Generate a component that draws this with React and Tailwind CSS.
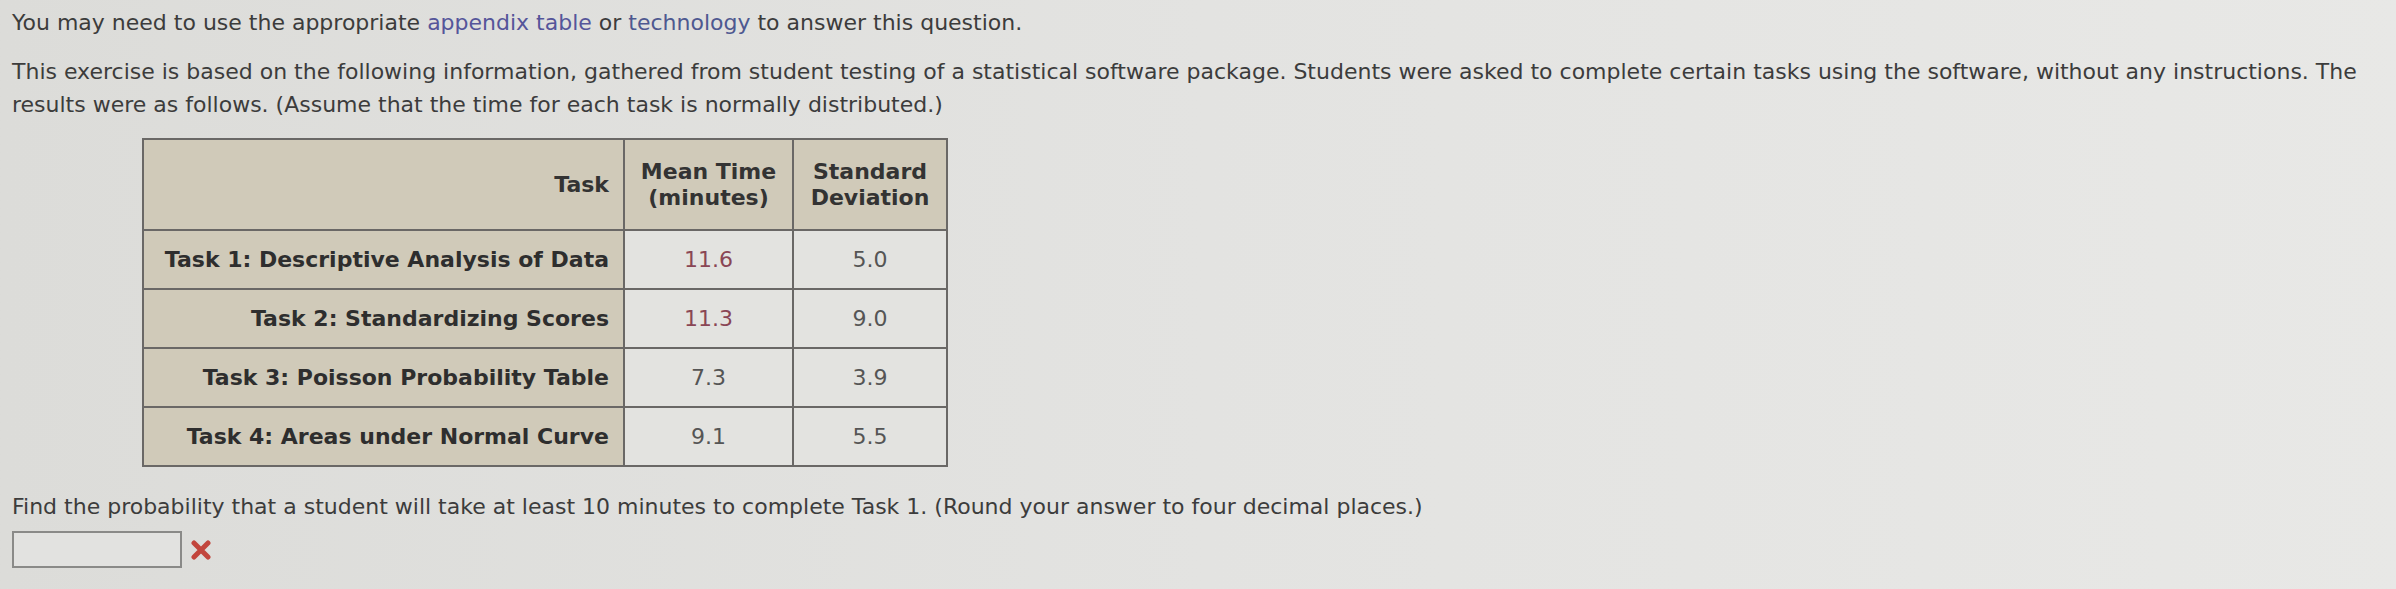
const ROWS = [
  { task: "Task 1: Descriptive Analysis of Data", mean: "11.6", sd: "5.0", red: true },
  { task: "Task 2: Standardizing Scores", mean: "11.3", sd: "9.0", red: true },
  { task: "Task 3: Poisson Probability Table", mean: "7.3", sd: "3.9" },
  { task: "Task 4: Areas under Normal Curve", mean: "9.1", sd: "5.5" },
]

export default function App() {
  return (
    <div className="w-[2396px] h-[589px] overflow-hidden bg-gradient-to-r from-[#dcdcd9] via-[#e3e3e1] to-[#e8e8e6] text-[#3c3c3c] text-[22px] pl-[12px] pr-[4px] pt-[7px]"
      style={{ fontFamily: '"DejaVu Sans", Verdana, sans-serif' }}>
      <p className="leading-[32px]">
        You may need to use the appropriate <span className="text-[#55559a]">appendix table</span> or <span className="text-[#4e5890]">technology</span> to answer this question.
      </p>
      <p className="leading-[33px] mt-[16px]">
        This exercise is based on the following information, gathered from student testing of a statistical software package. Students were asked to complete certain tasks using the software, without any instructions. The results were as follows. (Assume that the time for each task is normally distributed.)
      </p>

      <table className="ml-[130px] mt-[17px] border-collapse border-2 border-[#6a6866] text-[22px]">
        <thead>
          <tr className="h-[91px] bg-[#d0cab9]">
            <th className="w-[481px] border-2 border-[#6a6866] text-right pr-[14px] font-bold text-[#333]">Task</th>
            <th className="w-[169px] border-2 border-[#6a6866] text-center font-bold leading-[26px] text-[#333]">Mean Time<br />(minutes)</th>
            <th className="w-[154px] border-2 border-[#6a6866] text-center font-bold leading-[26px] text-[#333]">Standard<br />Deviation</th>
          </tr>
        </thead>
        <tbody>
          {ROWS.map((r, i) => (
            <tr key={i} className="h-[59px]">
              <td className="bg-[#d0cab9] border-2 border-[#6a6866] text-right pr-[14px] font-bold text-[#2e2e2e]">{r.task}</td>
              <td className={`bg-[#e3e3e0] border-2 border-[#6a6866] text-center ${r.red ? "text-[#8a4655]" : "text-[#555]"}`}>{r.mean}</td>
              <td className="bg-[#e3e3e0] border-2 border-[#6a6866] text-center text-[#555]">{r.sd}</td>
            </tr>
          ))}
        </tbody>
      </table>

      <p className="mt-[24px] leading-[32px]">
        Find the probability that a student will take at least 10 minutes to complete Task 1. (Round your answer to four decimal places.)
      </p>
      <div className="flex items-center mt-[8px] gap-[8px]">
        <div className="w-[170px] h-[37px] border-2 border-[#8a8a88] bg-[#e2e2e0]" />
        <svg width="22" height="20" viewBox="0 0 22 20">
          <path d="M4 3 L18 17 M18 3 L4 17" stroke="#c2453c" strokeWidth="5" strokeLinecap="round" />
        </svg>
      </div>
    </div>
  )
}
